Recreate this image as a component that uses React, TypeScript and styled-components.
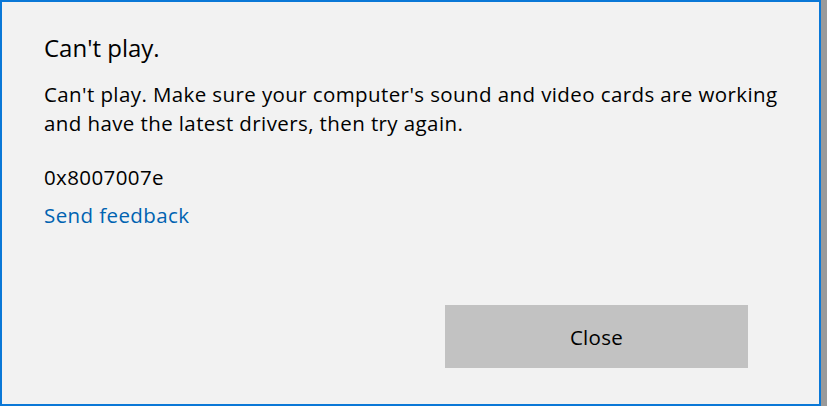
import React from "react";
import styled, { createGlobalStyle } from "styled-components";

const Global = createGlobalStyle`
  html, body {
    margin: 0;
    padding: 0;
    background: #9a9a9a;
  }
`;

const Screen = styled.div`
  width: 827px;
  height: 406px;
  display: flex;
  background: #9a9a9a;
`;

const Dialog = styled.div`
  width: 821px;
  height: 406px;
  box-sizing: border-box;
  border: 2px solid #0a78d7;
  background: #f2f2f2;
  padding: 30px 30px 36px 42px;
  display: flex;
  flex-direction: column;
  font-family: "Open Sans", "Noto Sans", sans-serif;
  color: #000;
`;

const Title = styled.h1`
  margin: 0;
  font-size: 24px;
  font-weight: 400;
  line-height: 32px;
`;

const Text = styled.div<{ $gap: number }>`
  margin-top: ${(p) => p.$gap}px;
  font-size: 20.5px;
  line-height: 29px;
  letter-spacing: 0.4px;
  white-space: nowrap;
`;

const Link = styled.a`
  margin-top: 9px;
  font-size: 20.5px;
  line-height: 29px;
  letter-spacing: 0.4px;
  color: #0063b1;
  text-decoration: none;
  align-self: flex-start;
`;

const Footer = styled.div`
  margin-top: auto;
  display: flex;
  justify-content: flex-end;
  padding-right: 41px;
`;

const Button = styled.button`
  width: 303px;
  height: 63px;
  border: none;
  background: #c2c2c2;
  font-family: inherit;
  font-size: 20.5px;
  letter-spacing: 0.3px;
  color: #000;
`;

export default function App() {
  return (
    <Screen>
      <Global />
      <Dialog>
        <Title>Can't play.</Title>
        <Text $gap={16}>
          Can't play. Make sure your computer's sound and video cards are working
          <br />
          and have the latest drivers, then try again.
        </Text>
        <Text $gap={25}>0x8007007e</Text>
        <Link href="#">Send feedback</Link>
        <Footer>
          <Button>Close</Button>
        </Footer>
      </Dialog>
    </Screen>
  );
}
